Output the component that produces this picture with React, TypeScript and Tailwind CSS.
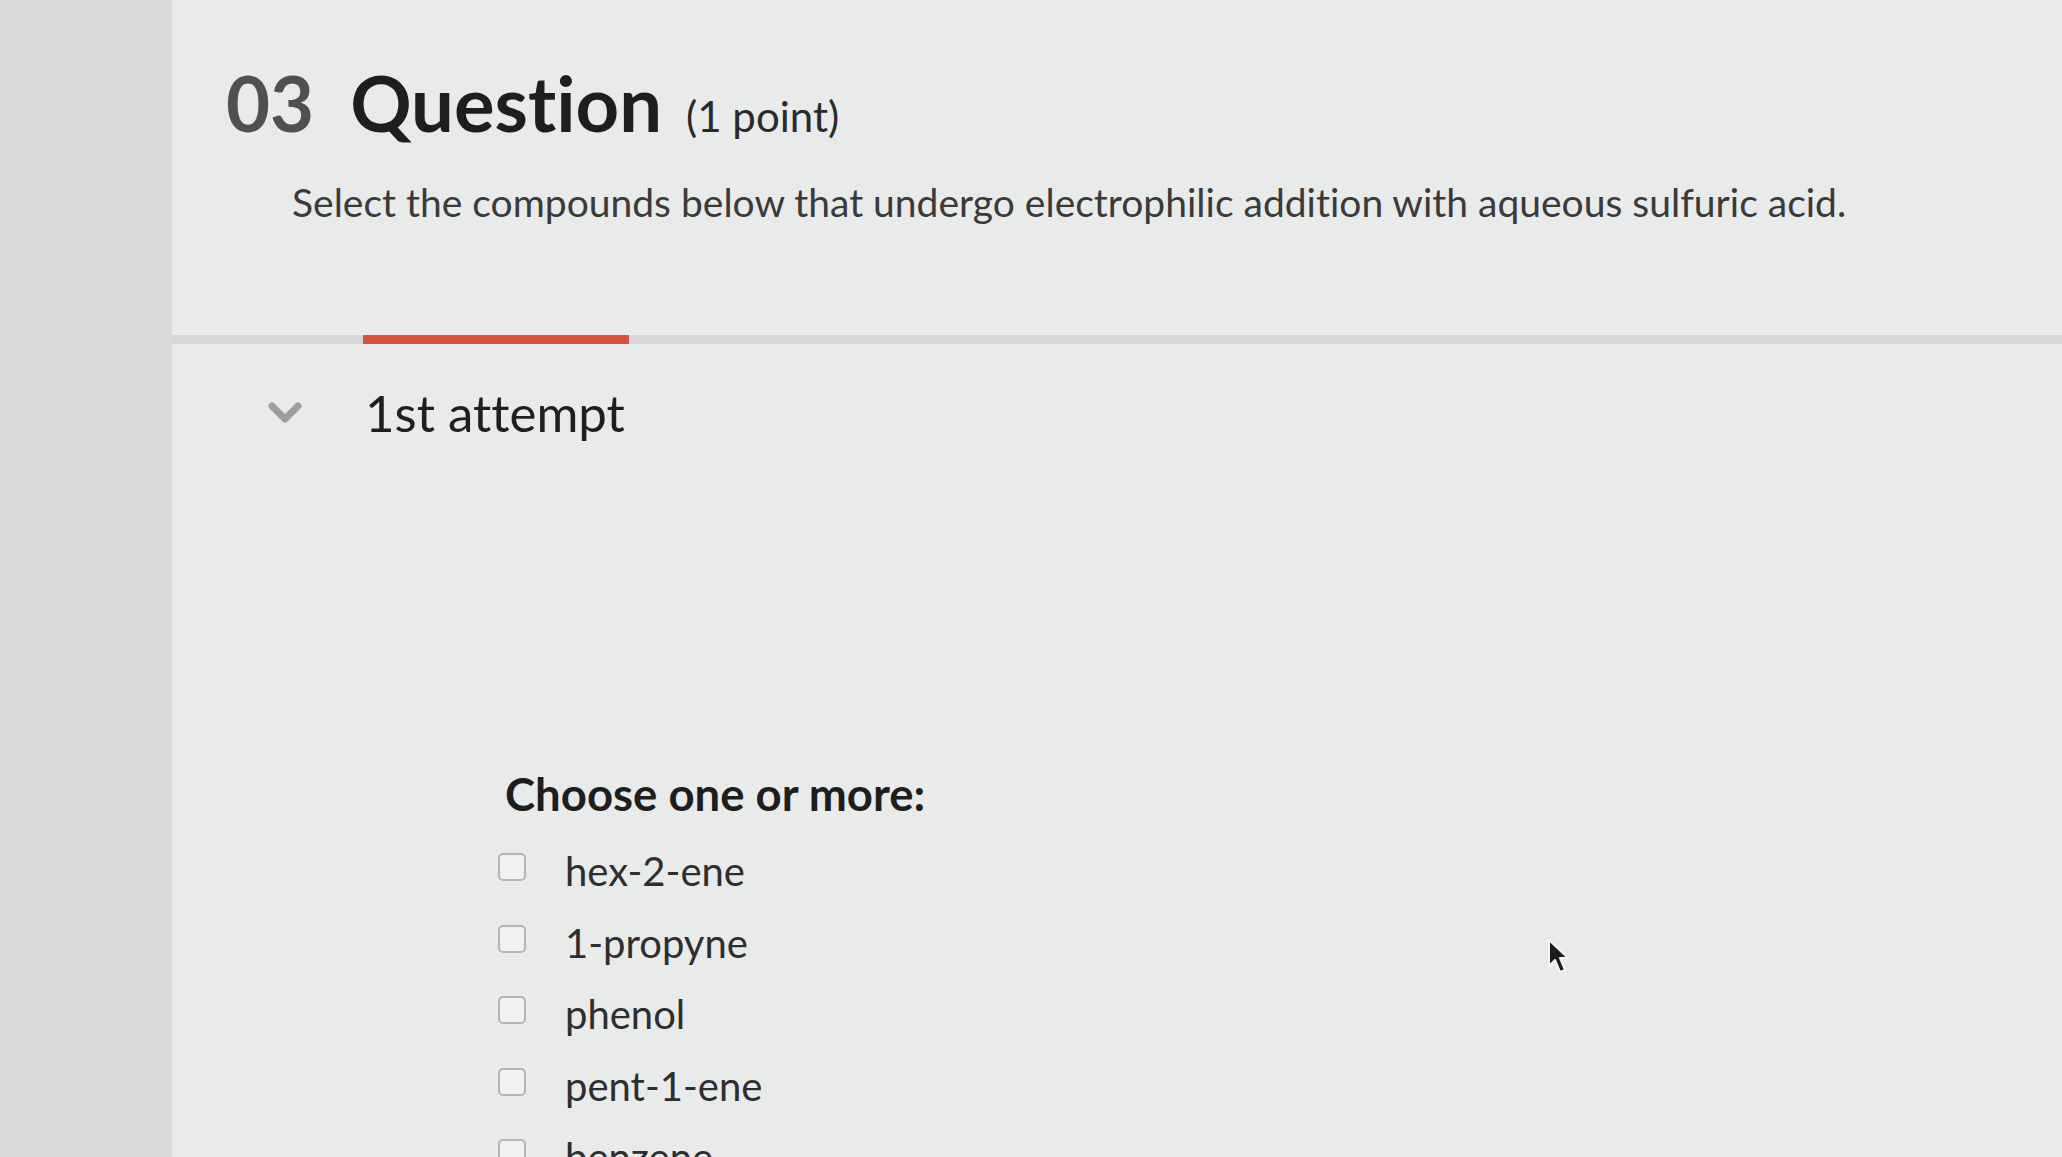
const options = ['hex-2-ene', '1-propyne', 'phenol', 'pent-1-ene', 'benzene'];

function Chevron() {
  return (
    <svg width="36" height="26" viewBox="0 0 36 26" fill="none">
      <path d="M5 6 L18 19 L31 6" stroke="#9d9e9f" strokeWidth="7" strokeLinecap="round" strokeLinejoin="round" />
    </svg>
  );
}

function Cursor() {
  return (
    <svg width="24" height="38" viewBox="0 0 24 38" className="absolute left-[1547px] top-[938px]">
      <path d="M2 2 L2 28 L8 22 L13 34 L18 32 L13 20 L21 20 Z" fill="#1c1c1e" stroke="#f4f4f4" strokeWidth="2" strokeLinejoin="round" />
    </svg>
  );
}

export default function App() {
  return (
    <div className="relative flex h-[1157px] w-[2062px] overflow-hidden font-['Lato',sans-serif] [font-variant-ligatures:none]">
      <div className="w-[172px] shrink-0 bg-[#d9dadc]" />
      <div className="flex-1 bg-[#e9eaea]">
        <div className="pl-[54px] pt-[65px]">
          <h1 className="flex items-baseline leading-none">
            <span className="text-[76px] font-bold text-[#505050]">03</span>
            <span className="ml-[36px] text-[76px] font-bold text-[#1e1e1e]">Question</span>
            <span className="ml-[24px] text-[42px] text-[#2a2a2a]">(1 point)</span>
          </h1>
        </div>
        <p className="mt-[42px] pl-[120px] text-[39px] leading-none text-[#3a3a3a]">
          Select the compounds below that undergo electrophilic addition with aqueous sulfuric acid.
        </p>

        <div className="mt-[113px] flex h-[9px] bg-[#d6d7d7]">
          <div className="ml-[191px] w-[266px] bg-[#d8513c]" />
        </div>

        <div className="mt-[43px] flex items-center pl-[95px]">
          <Chevron />
          <span className="ml-[62px] text-[51px] leading-none text-[#1f1f1f]">1st attempt</span>
        </div>

        <div className="mt-[333px] pl-[333px] text-[45.5px] font-bold leading-none text-[#1e1e1e]">
          Choose one or more:
        </div>

        <ul className="mt-[19px] pl-[326px]">
          {options.map((o) => (
            <li key={o} className="flex h-[71.5px] items-center">
              <span className="mb-[8px] h-[28px] w-[28px] shrink-0 rounded-[5px] border-2 border-[#b4b5b6] bg-[#f0f1f1]" />
              <span className="ml-[39px] text-[40px] leading-none text-[#2e2e2e]">{o}</span>
            </li>
          ))}
        </ul>
      </div>
      <Cursor />
    </div>
  );
}
